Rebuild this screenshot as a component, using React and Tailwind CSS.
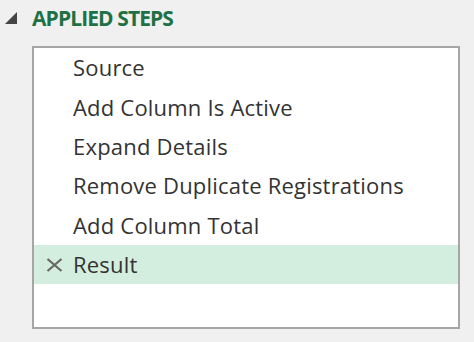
const steps = [
  "Source",
  "Add Column Is Active",
  "Expand Details",
  "Remove Duplicate Registrations",
  "Add Column Total",
  "Result",
];

const App = () => {
  return (
    <div
      className="w-[474px] h-[342px] bg-[#f0f0f0] overflow-hidden"
      style={{ fontFamily: '"Open Sans", "Noto Sans", sans-serif' }}
    >
      {/* header */}
      <div className="flex items-center h-[37px] pl-[5px]">
        <svg width="12" height="12" viewBox="0 0 12 12" className="mt-[-2px]">
          <polygon points="12,0 12,12 0,12" fill="#444" />
        </svg>
        <span className="ml-[15px] text-[21px] font-bold text-[#1f7145] tracking-[-0.9px]">
          APPLIED STEPS
        </span>
      </div>

      {/* steps list */}
      <div className="ml-[32px] mt-[9px] w-[428px] h-[283px] bg-white border-2 border-[#a6a6a6]">
        {steps.map((s, i) => {
          const active = i === steps.length - 1;
          return (
            <div
              key={s}
              className={`flex items-center h-[39.4px] text-[22px] text-[#333] ${
                active ? "bg-[#d3eede]" : ""
              }`}
            >
              <div className="w-[39px] flex justify-center pl-[2px]">
                {active && (
                  <svg width="17" height="14" viewBox="0 0 17 14">
                    <path d="M1.5 1 L15.5 13 M15.5 1 L1.5 13" stroke="#666" strokeWidth="2.2" />
                  </svg>
                )}
              </div>
              <span className="tracking-[0.2px]">{s}</span>
            </div>
          );
        })}
      </div>
    </div>
  );
};

export default App;
